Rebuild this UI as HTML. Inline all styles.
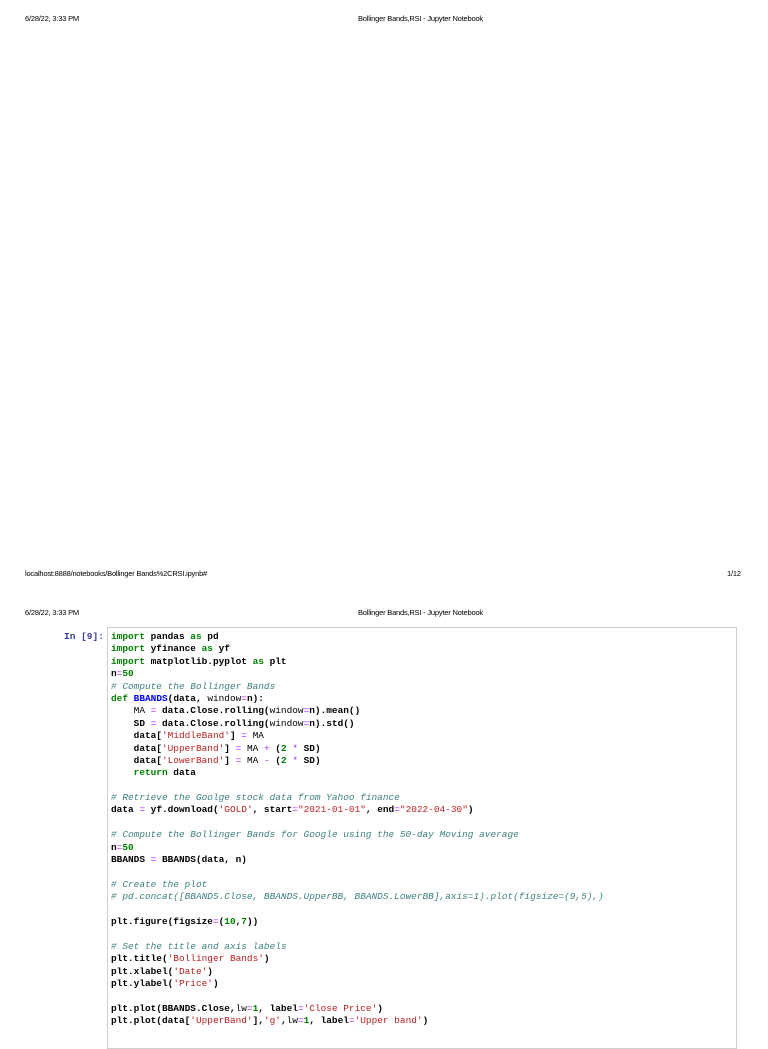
<!DOCTYPE html>
<html><head><style>
body{margin:0;width:768px;height:1024px;background:#fff;position:relative;overflow:hidden;font-family:"Liberation Sans",sans-serif;}
.h{position:absolute;font-size:7.5px;color:#000;letter-spacing:-0.2px}
.cell{position:absolute;left:107px;top:627px;width:628px;height:420px;border:1px solid #cfcfcf;background:#fff}
.prompt{position:absolute;left:64px;top:631px;font-family:"Liberation Mono",monospace;font-size:9.5px;color:#303f9f;font-weight:bold;line-height:12.39px}
pre{position:absolute;left:111px;top:631px;margin:0;font-family:"Liberation Mono",monospace;font-size:9.45px;line-height:12.39px;color:#000;font-weight:bold}
.k{color:#008000}.n{color:#008000}.c{color:#408080;font-style:italic;font-weight:normal}.s{color:#ba2121;font-weight:normal}.f{color:#0000ff}.o{color:#aa22ff;font-weight:normal}.w{font-weight:normal}
</style></head><body>
<div class="h" style="left:25px;top:14px">6/28/22, 3:33 PM</div>
<div class="h" style="left:358px;top:14px">Bollinger Bands,RSI - Jupyter Notebook</div>
<div class="h" style="left:25px;top:569px">localhost:8888/notebooks/Bollinger Bands%2CRSI.ipynb#</div>
<div class="h" style="left:727px;top:569px">1/12</div>
<div class="h" style="left:25px;top:608px">6/28/22, 3:33 PM</div>
<div class="h" style="left:358px;top:608px">Bollinger Bands,RSI - Jupyter Notebook</div>
<div class="cell"></div>
<div class="prompt">In [9]:</div>
<pre><span class="k">import</span> pandas <span class="k">as</span> pd
<span class="k">import</span> yfinance <span class="k">as</span> yf
<span class="k">import</span> matplotlib.pyplot <span class="k">as</span> plt
n<span class="o">=</span><span class="n">50</span>
<span class="c"># Compute the Bollinger Bands</span>
<span class="k">def</span> <span class="f">BBANDS</span>(data, <span class="w">window</span><span class="o">=</span>n):
    <span class="w">MA</span> <span class="o">=</span> data.Close.rolling(<span class="w">window</span><span class="o">=</span>n).mean()
    SD <span class="o">=</span> data.Close.rolling(<span class="w">window</span><span class="o">=</span>n).std()
    data[<span class="s">'MiddleBand'</span>] <span class="o">=</span> <span class="w">MA</span>
    data[<span class="s">'UpperBand'</span>] <span class="o">=</span> <span class="w">MA</span> <span class="o">+</span> (<span class="n">2</span> <span class="o">*</span> SD)
    data[<span class="s">'LowerBand'</span>] <span class="o">=</span> <span class="w">MA</span> <span class="o">-</span> (<span class="n">2</span> <span class="o">*</span> SD)
    <span class="k">return</span> data

<span class="c"># Retrieve the Goolge stock data from Yahoo finance</span>
data <span class="o">=</span> yf.download(<span class="s">'GOLD'</span>, start<span class="o">=</span><span class="s">"2021-01-01"</span>, end<span class="o">=</span><span class="s">"2022-04-30"</span>)

<span class="c"># Compute the Bollinger Bands for Google using the 50-day Moving average</span>
n<span class="o">=</span><span class="n">50</span>
BBANDS <span class="o">=</span> BBANDS(data, n)

<span class="c"># Create the plot</span>
<span class="c"># pd.concat([BBANDS.Close, BBANDS.UpperBB, BBANDS.LowerBB],axis=1).plot(figsize=(9,5),)</span>

plt.figure(figsize<span class="o">=</span>(<span class="n">10</span>,<span class="n">7</span>))

<span class="c"># Set the title and axis labels</span>
plt.title(<span class="s">'Bollinger Bands'</span>)
plt.xlabel(<span class="s">'Date'</span>)
plt.ylabel(<span class="s">'Price'</span>)

plt.plot(BBANDS.Close,<span class="w">lw</span><span class="o">=</span><span class="n">1</span>, label<span class="o">=</span><span class="s">'Close Price'</span>)
plt.plot(data[<span class="s">'UpperBand'</span>],<span class="s">'g'</span>,<span class="w">lw</span><span class="o">=</span><span class="n">1</span>, label<span class="o">=</span><span class="s">'Upper band'</span>)
</pre>
</body></html>
